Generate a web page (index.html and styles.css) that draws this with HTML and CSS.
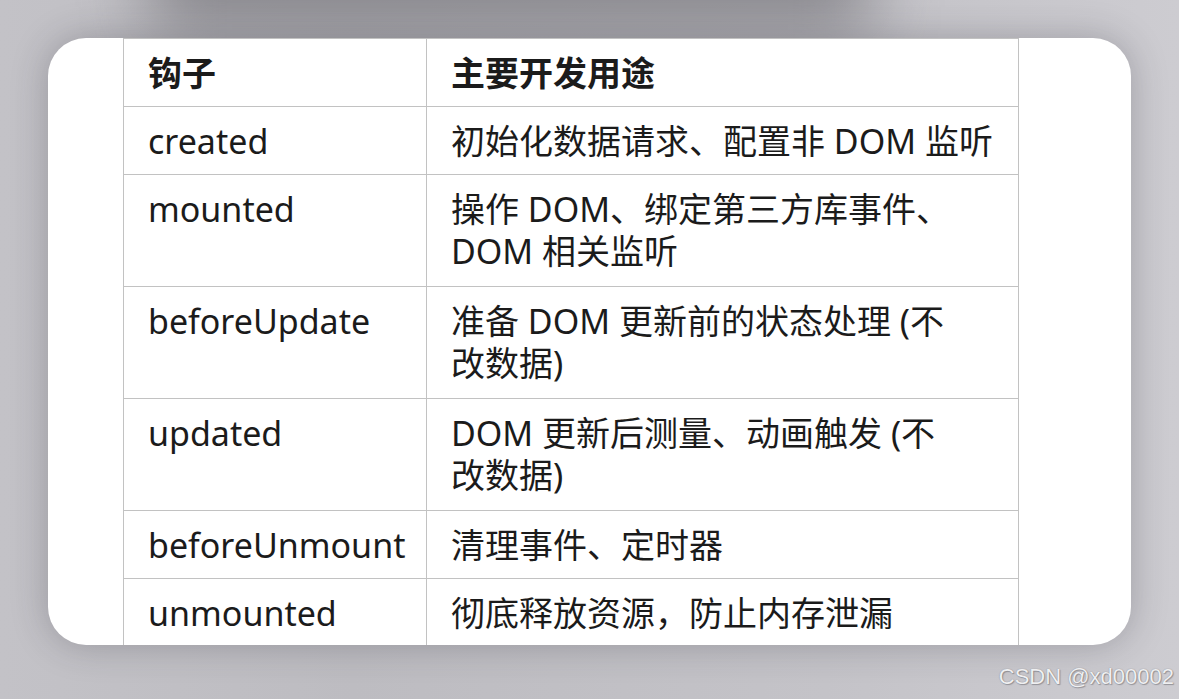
FILE: index.html
```html
<!DOCTYPE html>
<html lang="zh">
<head>
  <meta charset="UTF-8">
  <title>Vue 生命周期钩子</title>
  <link rel="stylesheet" href="styles.css">
</head>
<body>
  <div class="stage">
    <div class="card">
      <table class="hooks">
        <thead>
          <tr>
            <th class="col-hook">钩子</th>
            <th class="col-use">主要开发用途</th>
          </tr>
        </thead>
        <tbody>
          <tr>
            <td>created</td>
            <td>初始化数据请求、配置非 DOM 监听</td>
          </tr>
          <tr class="tall">
            <td>mounted</td>
            <td>操作 DOM、绑定第三方库事件、<br>DOM 相关监听</td>
          </tr>
          <tr class="tall">
            <td>beforeUpdate</td>
            <td>准备 DOM 更新前的状态处理 (不<br>改数据)</td>
          </tr>
          <tr class="tall">
            <td>updated</td>
            <td>DOM 更新后测量、动画触发 (不<br>改数据)</td>
          </tr>
          <tr>
            <td>beforeUnmount</td>
            <td>清理事件、定时器</td>
          </tr>
          <tr>
            <td>unmounted</td>
            <td>彻底释放资源，防止内存泄漏</td>
          </tr>
        </tbody>
      </table>
    </div>
    <div class="watermark">CSDN @xd00002</div>
  </div>
</body>
</html>
```

FILE: styles.css
```css
* { margin: 0; padding: 0; box-sizing: border-box; }
html, body { width: 1179px; height: 699px; overflow: hidden; }
body {
  background: #c7c6cb;
  font-family: "Noto Sans", "Noto Sans CJK SC", sans-serif;
}
.stage {
  position: relative;
  width: 1179px;
  height: 699px;
  padding: 38px 0 0 48px;
  background: linear-gradient(90deg, #c3c2c7 0%, #bdbcc1 30%, #c4c3c8 70%, #cdccd1 100%);
}
/* 上方模糊的阴影 */
.stage::before {
  content: "";
  position: absolute;
  left: 150px;
  top: -70px;
  width: 720px;
  height: 100px;
  background: #6f6e74;
  filter: blur(34px);
  opacity: 0.7;
}
.card {
  position: relative;
  width: 1083px;
  height: 607px;
  padding-left: 75px;
  background: #fff;
  border-radius: 38px;
  overflow: hidden;
  box-shadow: 0 0 36px rgba(40, 40, 50, 0.28);
}
.hooks {
  table-layout: fixed;
  border-collapse: collapse;
  width: 896px;
  color: #1b1b1b;
  font-size: 34px;
  line-height: 42px;
}
.hooks th, .hooks td {
  border: 1px solid #c2c2c2;
  padding: 13px 0 0 24px;
  text-align: left;
  vertical-align: top;
  white-space: nowrap;
}
.hooks th { font-weight: 700; }
.col-hook { width: 303px; }
.hooks tr { height: 68px; }
.hooks tr.tall { height: 112px; }
.watermark {
  position: absolute;
  right: 5px;
  bottom: 9px;
  font-family: "Liberation Sans", Arial, sans-serif;
  font-size: 22px;
  color: #efeff1;
  text-shadow: 0 0 1px rgba(60, 60, 70, 0.55), 1px 1px 1px rgba(60, 60, 70, 0.35);
}
```
